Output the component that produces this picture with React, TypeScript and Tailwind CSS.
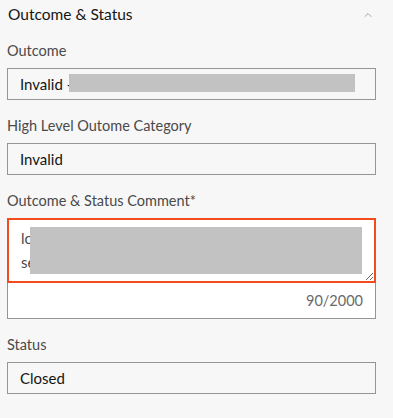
import { ChevronUp } from 'lucide-react';

const font = { fontFamily: 'Lato, "Open Sans", sans-serif' };

const ReadField = ({ label, value, redact }: { label: string; value: string; redact?: boolean }) => (
  <div className="flex flex-col">
    <div className="h-5 text-[14.5px] leading-5 text-[#4a4a4a]">{label}</div>
    <div className="relative mt-[7px] flex h-8 items-center border border-[#959595] px-3 text-[15px] text-[#151515]">
      {value}
      {redact && <div className="absolute left-[61px] top-[5px] h-[18px] w-[286px] bg-[#c2c2c2]" />}
    </div>
  </div>
);

export default function App() {
  return (
    <div className="min-h-[418px] w-[393px] bg-[#f7f7f7]" style={font}>
      <div className="flex h-[30px] items-center justify-between pl-2 pr-[19px]">
        <span className="text-[15.5px] text-[#151515]">Outcome &amp; Status</span>
        <ChevronUp size={12} strokeWidth={1.5} className="text-[#8a8a8a]" />
      </div>
      <div className="flex w-[376px] flex-col gap-4 pl-[7px] pt-[11px]">
        <ReadField label="Outcome" value="Invalid -" redact />
        <ReadField label="High Level Outome Category" value="Invalid" />
        <div className="flex flex-col">
          <div className="h-5 text-[14.5px] leading-5 text-[#4a4a4a]">Outcome &amp; Status Comment*</div>
          <div className="mt-[7px] flex flex-col">
            <div className="relative">
              <textarea
                readOnly
                defaultValue={'lorem ipsum dolor sit amet consectetur\nsed do eiusmod tempor'}
                className="block h-[65px] w-full resize-y border-2 border-[#f24c1e] bg-white px-3 pt-[6px] text-[15px] leading-6 text-[#4a4a4a] outline-none"
                style={font}
              />
              <div className="absolute left-[23px] top-[9px] h-[47px] w-[332px] bg-[#c2c2c2]" />
            </div>
            <div className="flex h-9 items-center justify-end border border-t-0 border-[#959595] bg-white pr-[12px] text-[14.5px] text-[#6a6a6a]">
              90/2000
            </div>
          </div>
        </div>
        <ReadField label="Status" value="Closed" />
      </div>
    </div>
  );
}
